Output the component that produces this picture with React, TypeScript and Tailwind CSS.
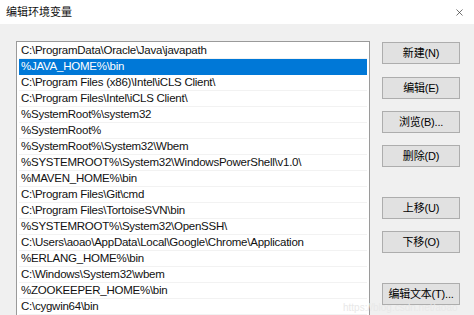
import { X } from "lucide-react";

const paths = [
  "C:\\ProgramData\\Oracle\\Java\\javapath",
  "%JAVA_HOME%\\bin",
  "C:\\Program Files (x86)\\Intel\\iCLS Client\\",
  "C:\\Program Files\\Intel\\iCLS Client\\",
  "%SystemRoot%\\system32",
  "%SystemRoot%",
  "%SystemRoot%\\System32\\Wbem",
  "%SYSTEMROOT%\\System32\\WindowsPowerShell\\v1.0\\",
  "%MAVEN_HOME%\\bin",
  "C:\\Program Files\\Git\\cmd",
  "C:\\Program Files\\TortoiseSVN\\bin",
  "%SYSTEMROOT%\\System32\\OpenSSH\\",
  "C:\\Users\\aoao\\AppData\\Local\\Google\\Chrome\\Application",
  "%ERLANG_HOME%\\bin",
  "C:\\Windows\\System32\\wbem",
  "%ZOOKEEPER_HOME%\\bin",
  "C:\\cygwin64\\bin",
];

const font = "font-['Liberation_Sans','Noto_Sans_CJK_SC',sans-serif]";

function Btn({ label, className = "" }: { label: string; className?: string }) {
  return (
    <button
      className={`h-[22px] w-[78px] border border-[#adadad] bg-[#e1e1e1] text-[11px] tracking-[-0.2px] text-black leading-none ${className}`}
    >
      {label}
    </button>
  );
}

export default function App() {
  return (
    <div className={`relative w-[474px] h-[315px] overflow-hidden bg-[#f0f0f0] ${font}`}>
      {/* title bar */}
      <div className="h-[24px] bg-white flex items-center justify-between pl-[6px] pr-[9px] pt-[1px]">
        <span className="text-[11px] text-[#111]">编辑环境变量</span>
        <X className="w-[11px] h-[11px] text-[#333]" strokeWidth={1.5} />
      </div>

      <div className="flex pl-[16px] pt-[17px]">
        <div className="w-[354px] h-[300px] border border-[#9a9a9a] bg-white px-[2px] pt-[1px]">
          {paths.map((p, i) => (
            <div
              key={p}
              className={`h-[16px] pl-[2px] flex items-center text-[11.5px] tracking-[-0.25px] whitespace-nowrap border-b ${
                i === 1
                  ? "bg-[#0078d7] text-white border-[#0078d7]"
                  : "text-[#111] border-[#f2f2f2]"
              }`}
            >
              {p}
            </div>
          ))}
        </div>

        <div className="flex flex-col ml-[12px] pt-[1px]">
          <Btn label="新建(N)" />
          <Btn label="编辑(E)" className="mt-[13px]" />
          <Btn label="浏览(B)..." className="mt-[12px]" />
          <Btn label="删除(D)" className="mt-[12px]" />
          <Btn label="上移(U)" className="mt-[30px]" />
          <Btn label="下移(O)" className="mt-[12px]" />
          <Btn label="编辑文本(T)..." className="mt-[30px]" />
        </div>
      </div>

      <span className="absolute left-[343px] top-[300px] text-[10px] text-[#e8e8e8]">
        https://blog.csdn.net/aoao
      </span>
    </div>
  );
}
